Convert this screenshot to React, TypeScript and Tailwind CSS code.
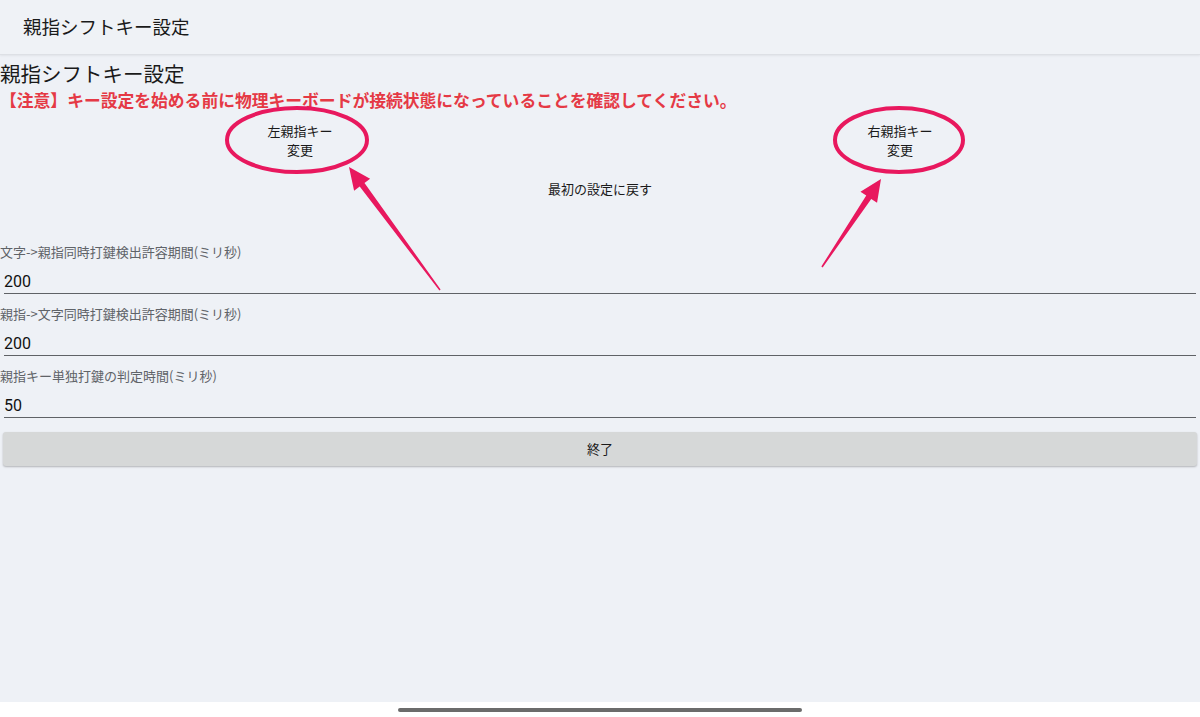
import React from "react";

const font = { fontFamily: '"Noto Sans CJK JP", "Noto Sans", sans-serif' };

function Field({ label, value }: { label: string; value: string }) {
  return (
    <div className="mb-[9px] flex flex-col">
      <div className="h-[22px] text-[13px] leading-[22px] text-[#5f6368]">{label}</div>
      <div className="mx-[4px] h-[31px] border-b border-[#5f6266] pt-[8px] text-[16px] leading-[22px] text-[#111]" style={{ fontFamily: 'Roboto, "Noto Sans CJK JP", sans-serif' }}>
        {value}
      </div>
    </div>
  );
}

export default function App() {
  return (
    <div className="relative flex h-[717px] w-[1200px] flex-col overflow-hidden bg-white" style={font}>
      <div className="flex h-[702px] flex-col bg-[#eef1f6]">
        <header className="flex h-[55px] shrink-0 items-center border-b border-[#dde0e5] bg-[#eff2f6] pl-[23px] shadow-[0_1px_2px_rgba(0,0,0,0.06)]">
          <span className="text-[18.5px] text-[#1a1a1a]">親指シフトキー設定</span>
        </header>
        <div className="flex flex-col">
          <div className="mt-[4px] h-[28px] text-[20.5px] leading-[28px] text-[#1a1a1a]">親指シフトキー設定</div>
          <div className="h-[26px] text-[16.8px] font-bold leading-[26px] text-[#e53945]">
            【注意】キー設定を始める前に物理キーボードが接続状態になっていることを確認してください。
          </div>
          <div className="mt-[2px] grid h-[49px] grid-cols-2">
            <div className="flex flex-col items-center justify-center text-[13px] leading-[19px] text-[#1a1a1a]">
              <span>左親指キー</span>
              <span>変更</span>
            </div>
            <div className="flex flex-col items-center justify-center text-[13px] leading-[19px] text-[#1a1a1a]">
              <span>右親指キー</span>
              <span>変更</span>
            </div>
          </div>
          <div className="flex h-[50px] items-center justify-center text-[13px] text-[#1a1a1a]">最初の設定に戻す</div>
          <div className="mt-[27px] flex flex-col">
            <Field label="文字->親指同時打鍵検出許容期間(ミリ秒)" value="200" />
            <Field label="親指->文字同時打鍵検出許容期間(ミリ秒)" value="200" />
            <Field label="親指キー単独打鍵の判定時間(ミリ秒)" value="50" />
          </div>
          <div className="mx-[3px] mt-[5px] flex h-[34px] items-center justify-center rounded-[3px] bg-[#d6d8d8] text-[13px] text-[#1a1a1a] shadow-[0_1px_2px_rgba(0,0,0,0.25)]">
            終了
          </div>
        </div>
      </div>
      <div className="flex flex-1 items-center justify-center">
        <div className="h-[4px] w-[404px] rounded-full bg-[#6b6b6b]" />
      </div>

      <svg className="pointer-events-none absolute left-0 top-0" width="1200" height="717">
        <ellipse cx="297" cy="140" rx="70" ry="32" fill="none" stroke="#e8185e" strokeWidth="4" />
        <ellipse cx="899" cy="140" rx="64" ry="32" fill="none" stroke="#e8185e" strokeWidth="4" />
        <polygon
          fill="#e8185e"
          points="349,167 370.1,178.75 364.5,182.9 440.6,289.5 439.4,290.5 359.7,186.5 354.1,190.65"
        />
        <polygon
          fill="#e8185e"
          points="881,179 877.05,202.83 871.24,198.93 822.66,267.45 821.34,266.55 866.26,195.59 860.45,191.69"
        />
      </svg>
    </div>
  );
}
